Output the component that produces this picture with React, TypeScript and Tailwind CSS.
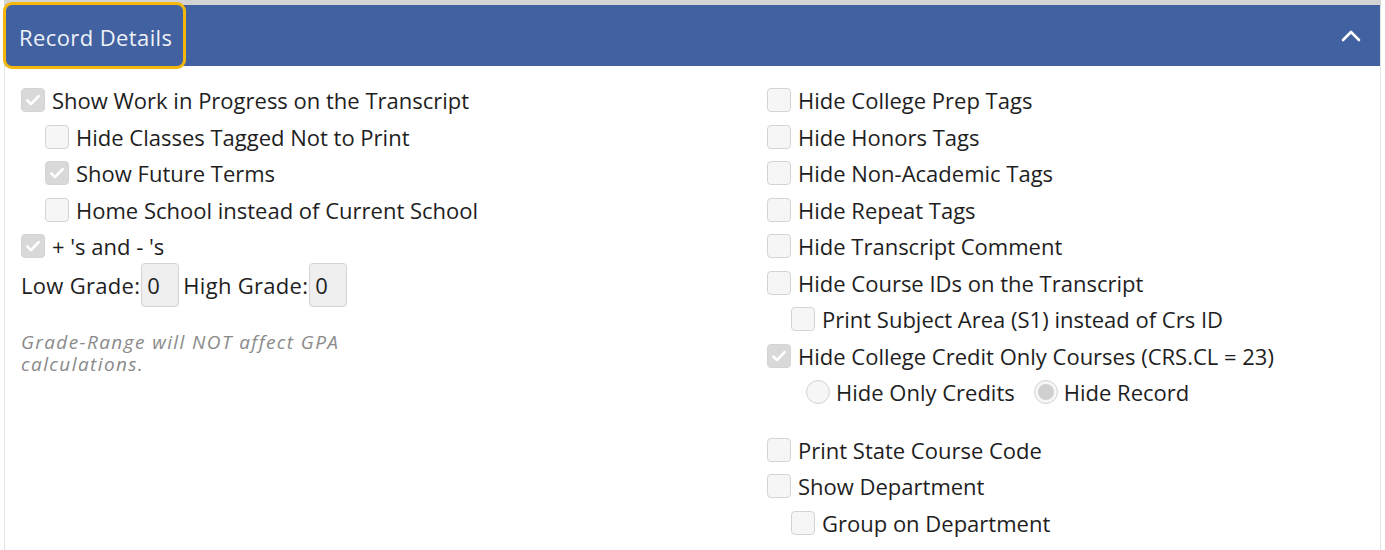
import React from "react";

type Item = { label: string; checked?: boolean; indent?: boolean };

const left: Item[] = [
  { label: "Show Work in Progress on the Transcript", checked: true },
  { label: "Hide Classes Tagged Not to Print", indent: true },
  { label: "Show Future Terms", checked: true, indent: true },
  { label: "Home School instead of Current School", indent: true },
  { label: "+ 's and - 's", checked: true },
];

const rightTop: Item[] = [
  { label: "Hide College Prep Tags" },
  { label: "Hide Honors Tags" },
  { label: "Hide Non-Academic Tags" },
  { label: "Hide Repeat Tags" },
  { label: "Hide Transcript Comment" },
  { label: "Hide Course IDs on the Transcript" },
  { label: "Print Subject Area (S1) instead of Crs ID", indent: true },
  { label: "Hide College Credit Only Courses (CRS.CL = 23)", checked: true },
];

const rightBottom: Item[] = [
  { label: "Print State Course Code" },
  { label: "Show Department" },
  { label: "Group on Department", indent: true },
];

function Box({ checked }: { checked?: boolean }) {
  return (
    <span
      className={`flex items-center justify-center w-6 h-6 rounded-[4px] border border-[#d4d4d4] shrink-0 ${
        checked ? "bg-[#d9d9d9]" : "bg-[#f6f6f6]"
      }`}
    >
      {checked && (
        <svg width="18" height="18" viewBox="0 0 16 16" fill="none">
          <path d="M3 8.5l3.2 3.2L13 4.5" stroke="#fff" strokeWidth="2.4" strokeLinecap="round" strokeLinejoin="round" />
        </svg>
      )}
    </span>
  );
}

function Row({ item }: { item: Item }) {
  return (
    <div className={`flex items-center h-[36.5px] ${item.indent ? "pl-6" : ""}`}>
      <Box checked={item.checked} />
      <span className="ml-[7px] whitespace-nowrap">{item.label}</span>
    </div>
  );
}

function Radio({ checked, label }: { checked?: boolean; label: string }) {
  return (
    <div className="flex items-center">
      <span className="flex items-center justify-center w-6 h-6 rounded-full border border-[#d4d4d4] bg-[#f6f6f6]">
        {checked && <span className="w-4 h-4 rounded-full bg-[#cfcfcf]" />}
      </span>
      <span className="ml-[6px] whitespace-nowrap">{label}</span>
    </div>
  );
}

function GradeBox() {
  return (
    <span className="flex items-center w-[38px] h-[44px] rounded-[4px] border border-[#d4d4d4] bg-[#efefef] pl-[5px]">
      0
    </span>
  );
}

export default function App() {
  return (
    <div
      className="w-[1385px] h-[550px] bg-white text-[#1e1e1e] text-[22px] leading-[28px] overflow-hidden"
      style={{ fontFamily: "'Open Sans', 'Noto Sans', sans-serif" }}
    >
      <div className="h-[5px] bg-[#d3d3d3] mx-[4px]" />
      <div className="ml-[4px] w-[1377px] border-l border-r border-[#e2e2e2] h-[545px]">
        {/* header */}
        <div className="relative h-[61px] bg-[#4161a0] flex items-center justify-between pr-[18px]">
          <div className="absolute -left-[2px] -top-[3px] w-[183px] h-[67px] rounded-[9px] border-[3px] border-[#f5b80a]" />
          <span className="pl-[14px] pt-[2px] text-[#eef1f7] text-[22px] tracking-[0.4px] font-medium">Record Details</span>
          <svg width="22" height="14" viewBox="0 0 22 14" fill="none">
            <path d="M3 11l8-8 8 8" stroke="#fff" strokeWidth="2.6" strokeLinecap="round" strokeLinejoin="round" />
          </svg>
        </div>

        {/* body */}
        <div className="grid grid-cols-[746px_1fr] pt-[16px] pl-[16px]">
          <div className="flex flex-col">
            {left.map((it) => (
              <Row key={it.label} item={it} />
            ))}
            <div className="flex items-center -mt-[2px] tracking-[0.3px]">
              <span>Low Grade:</span>
              <span className="ml-[1px]">
                <GradeBox />
              </span>
              <span className="ml-[4px]">High Grade:</span>
              <span className="ml-[1px]">
                <GradeBox />
              </span>
            </div>
            <p className="mt-[24px] w-[340px] text-[19px] leading-[22px] tracking-[1.4px] italic text-[#8a8a8a]">
              Grade-Range will NOT affect GPA calculations.
            </p>
          </div>
          <div className="flex flex-col">
            {rightTop.map((it) => (
              <Row key={it.label} item={it} />
            ))}
            <div className="flex items-center gap-[19px] h-[36.5px] pl-[39px]">
              <Radio label="Hide Only Credits" />
              <Radio label="Hide Record" checked />
            </div>
            <div className="h-[21px]" />
            {rightBottom.map((it) => (
              <Row key={it.label} item={it} />
            ))}
          </div>
        </div>
      </div>
    </div>
  );
}
